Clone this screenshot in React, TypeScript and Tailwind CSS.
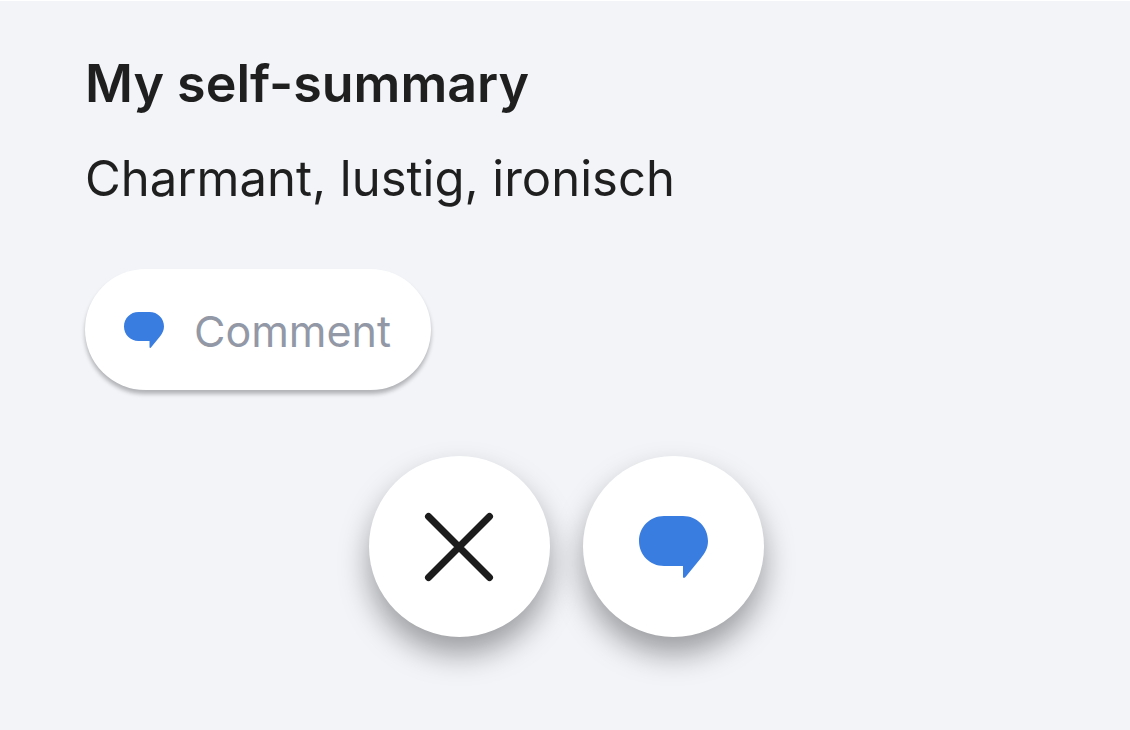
function Bubble({ className }: { className: string }) {
  return (
    <svg viewBox="0 0 69 62" className={className} fill="#3a7de1" aria-hidden="true">
      <path d="M25 0H44C58 0 69 11 69 25C69 32 66 37 62 42L46.500 61Q44 63 44 60.500V50H25C11 50 0 39 0 25C0 11 11 0 25 0Z" />
    </svg>
  );
}

export default function App() {
  return (
    <main className="min-h-screen border-t border-white bg-[#f2f4f8] pr-[83px] pl-[85px] pt-[50px] font-['Inter',sans-serif] text-[#1f1f1f]">
      <h1 className="text-[52px] leading-[66px] font-semibold">My self-summary</h1>
      <p className="mt-[29px] text-[49px] leading-[66px]">Charmant, lustig, ironisch</p>
      <button className="mt-[57px] flex h-[121px] w-fit items-center gap-[30px] rounded-full bg-white pr-10 pl-[39px] text-[43px] text-[#9298a6] shadow-[0_4px_4px_rgba(0,0,0,0.27)]">
        <Bubble className="h-9 w-10" />
        <span className="pt-1">Comment</span>
      </button>
      <div className="mt-[66px] flex justify-center gap-[33px]">
        <button aria-label="Pass" className="flex size-[181px] items-center justify-center rounded-full bg-white shadow-[0_17px_30px_rgba(0,0,0,0.36)]">
          <svg viewBox="0 0 70 70" className="size-[70px]" stroke="#1c1c1c" strokeWidth="7" strokeLinecap="round" aria-hidden="true">
            <path d="M4.500 4.500L65.500 65.500M65.500 4.500L4.500 65.500" />
          </svg>
        </button>
        <button aria-label="Message" className="flex size-[181px] items-center justify-center rounded-full bg-white shadow-[0_17px_30px_rgba(0,0,0,0.36)]">
          <Bubble className="h-[62px] w-[69px]" />
        </button>
      </div>
    </main>
  );
}
